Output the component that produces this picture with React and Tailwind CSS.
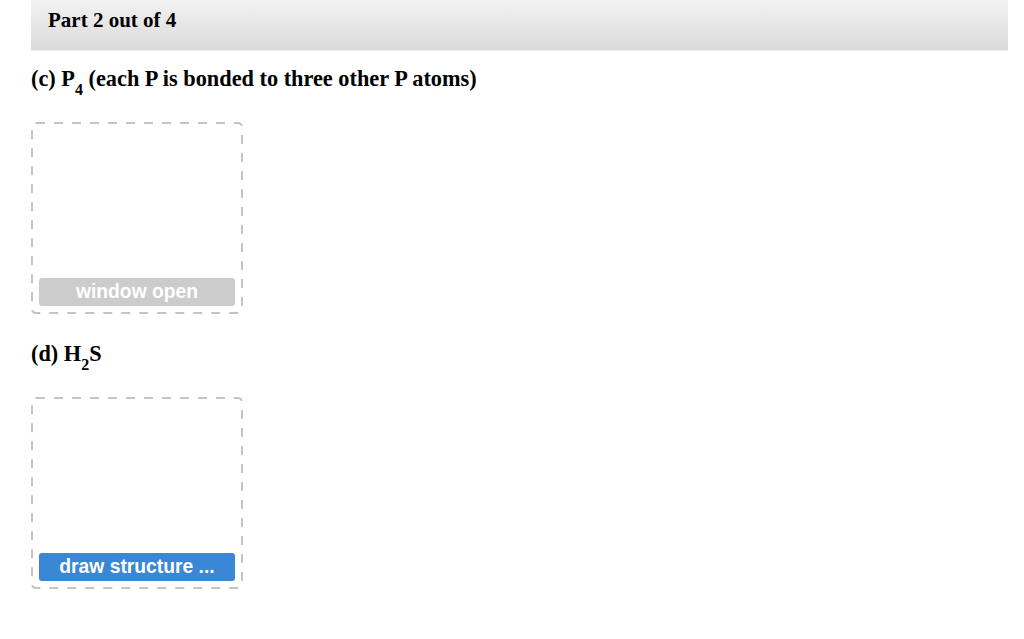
function DashedBox({ children, className = "" }) {
  return (
    <div className={"relative w-[212px] h-[192px] flex flex-col justify-end px-[8px] pb-[8px] " + className}>
      <svg className="absolute inset-0 pointer-events-none" width="212" height="192" viewBox="0 0 212 192">
        <rect x="1" y="1" width="210" height="190" rx="4" ry="4" fill="none" stroke="#c4c4c4" strokeWidth="2" strokeDasharray="9 9" />
      </svg>
      {children}
    </div>
  );
}

export default function App() {
  const serif = { fontFamily: '"Liberation Serif", "Times New Roman", serif' };
  const sans = { fontFamily: '"Liberation Sans", Arial, sans-serif' };
  return (
    <div className="min-h-[639px] bg-white pl-[31px] pr-[16px]">
      <div className="w-[977px] h-[51px] bg-gradient-to-b from-[#f2f2f2] to-[#dbdbdb] border-b border-[#ececec] flex items-center pl-[17px] pb-[8px]">
        <span className="text-[21px] font-bold text-black" style={serif}>Part 2 out of 4</span>
      </div>

      <div className="mt-[15px] text-[22.3px] font-bold text-black leading-[26px]" style={serif}>
        (c) P<sub className="text-[16px] align-[-5px] leading-none">4</sub> (each P is bonded to three other P atoms)
      </div>

      <DashedBox className="mt-[28px]">
        <div className="h-[28px] rounded-[3px] bg-[#cccccc] flex items-center justify-center text-white font-bold text-[19.3px]" style={sans}>
          window open
        </div>
      </DashedBox>

      <div className="mt-[27px] text-[22.3px] font-bold text-black leading-[26px]" style={serif}>
        (d) H<sub className="text-[16px] align-[-5px] leading-none">2</sub>S
      </div>

      <DashedBox className="mt-[28px]">
        <div className="h-[28px] rounded-[3px] bg-[#3a87d6] flex items-center justify-center text-white font-bold text-[19.3px]" style={sans}>
          draw structure ...
        </div>
      </DashedBox>
    </div>
  );
}
